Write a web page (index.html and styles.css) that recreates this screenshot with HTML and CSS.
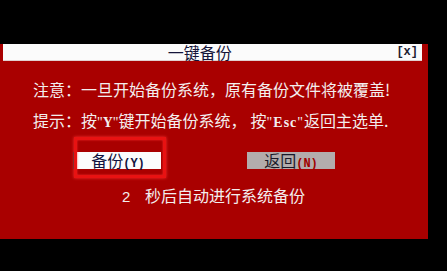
FILE: index.html
```html
<!DOCTYPE html>
<html lang="zh-CN">
<head>
<meta charset="utf-8">
<link rel="stylesheet" href="styles.css">
</head>
<body>
<div class="screen">
  <div class="dialog">
    <div class="titlebar">
      <span class="title">一键备份</span>
      <span class="close">[x]</span>
    </div>
    <div class="body">
      <p class="line l1">注意：一旦开始备份系统，原有备份文件将被覆盖!</p>
      <p class="line l2">提示：按<span class="q">"<b>Y</b>"</span>键开始备份系统，<span class="gap"></span>按<span class="q q-esc">"<b>Esc</b>"</span>返回主选单.</p>
      <div class="buttons">
        <div class="btn btn-ok">备份<span class="key">(Y)</span></div>
        <div class="btn btn-back">返回<span class="key key-n">(N)</span></div>
      </div>
      <p class="line countdown"><span class="num">2</span>秒后自动进行系统备份</p>
    </div>
  </div>
</div>
</body>
</html>
```

FILE: styles.css
```css
html, body {
  margin: 0;
  padding: 0;
  background: #000;
}
body {
  width: 447px;
  height: 271px;
  overflow: hidden;
  font-family: "Noto Sans CJK SC", "Noto Sans", sans-serif;
}
.screen {
  padding-top: 44px;
}
.dialog {
  width: 428px;
  height: 195px;
  background: #a90000;
  box-sizing: border-box;
  padding: 0 6px 0 3px;
}
.titlebar {
  height: 17px;
  background: #fbfbfb;
  display: flex;
  align-items: center;
  border-bottom: 1px solid #e0d0d0;
  box-sizing: border-box;
}
.title {
  flex: 1;
  text-align: center;
  font-size: 16px;
  line-height: 17px;
  color: #15153a;
}
.close {
  font-family: "Liberation Mono", monospace;
  font-weight: bold;
  font-size: 12px;
  color: #202030;
  padding-right: 4px;
}
.body {
  padding: 20px 0 0 30px;
  position: relative;
}
.line {
  margin: 0;
  font-size: 16px;
  line-height: 16px;
  height: 16px;
  color: #f3eeee;
  white-space: nowrap;
}
.l2 {
  margin-top: 15px;
}
.q {
  font-family: "Liberation Serif", serif;
  font-size: 14px;
  letter-spacing: 0;
}
.q-esc {
  letter-spacing: 1px;
}
.q b {
  font-weight: bold;
}
.gap {
  display: inline-block;
  width: 4px;
}
.buttons {
  display: flex;
  margin-top: 24px;
  height: 17px;
  position: relative;
}
.btn {
  height: 17px;
  line-height: 17px;
  font-size: 16px;
  text-align: center;
  box-sizing: border-box;
  position: relative;
}
.btn-ok {
  margin-left: 40px;
  width: 88px;
  background: #fcfcfc;
  color: #131340;
  border-left: 2px solid #3a2a2a;
  z-index: 1;
}
.btn-ok::before {
  content: "";
  position: absolute;
  left: -1px;
  top: -15px;
  width: 92px;
  height: 41px;
  border: 3px solid #e81212;
  box-sizing: border-box;
  box-shadow: 0 0 3px #ff3030, inset 0 0 2px #ff3030;
  z-index: -1;
}
.btn-back {
  margin-left: 86px;
  width: 88px;
  background: #b3acac;
  color: #1a1a2a;
}
.key {
  font-family: "Liberation Mono", monospace;
  font-weight: bold;
  font-size: 12px;
}
.key-n {
  color: #a00000;
}
.countdown {
  margin-top: 18px;
  padding-left: 89px;
}
.num {
  font-family: "Liberation Sans", sans-serif;
  font-size: 15px;
  display: inline-block;
  width: 23px;
}
```
